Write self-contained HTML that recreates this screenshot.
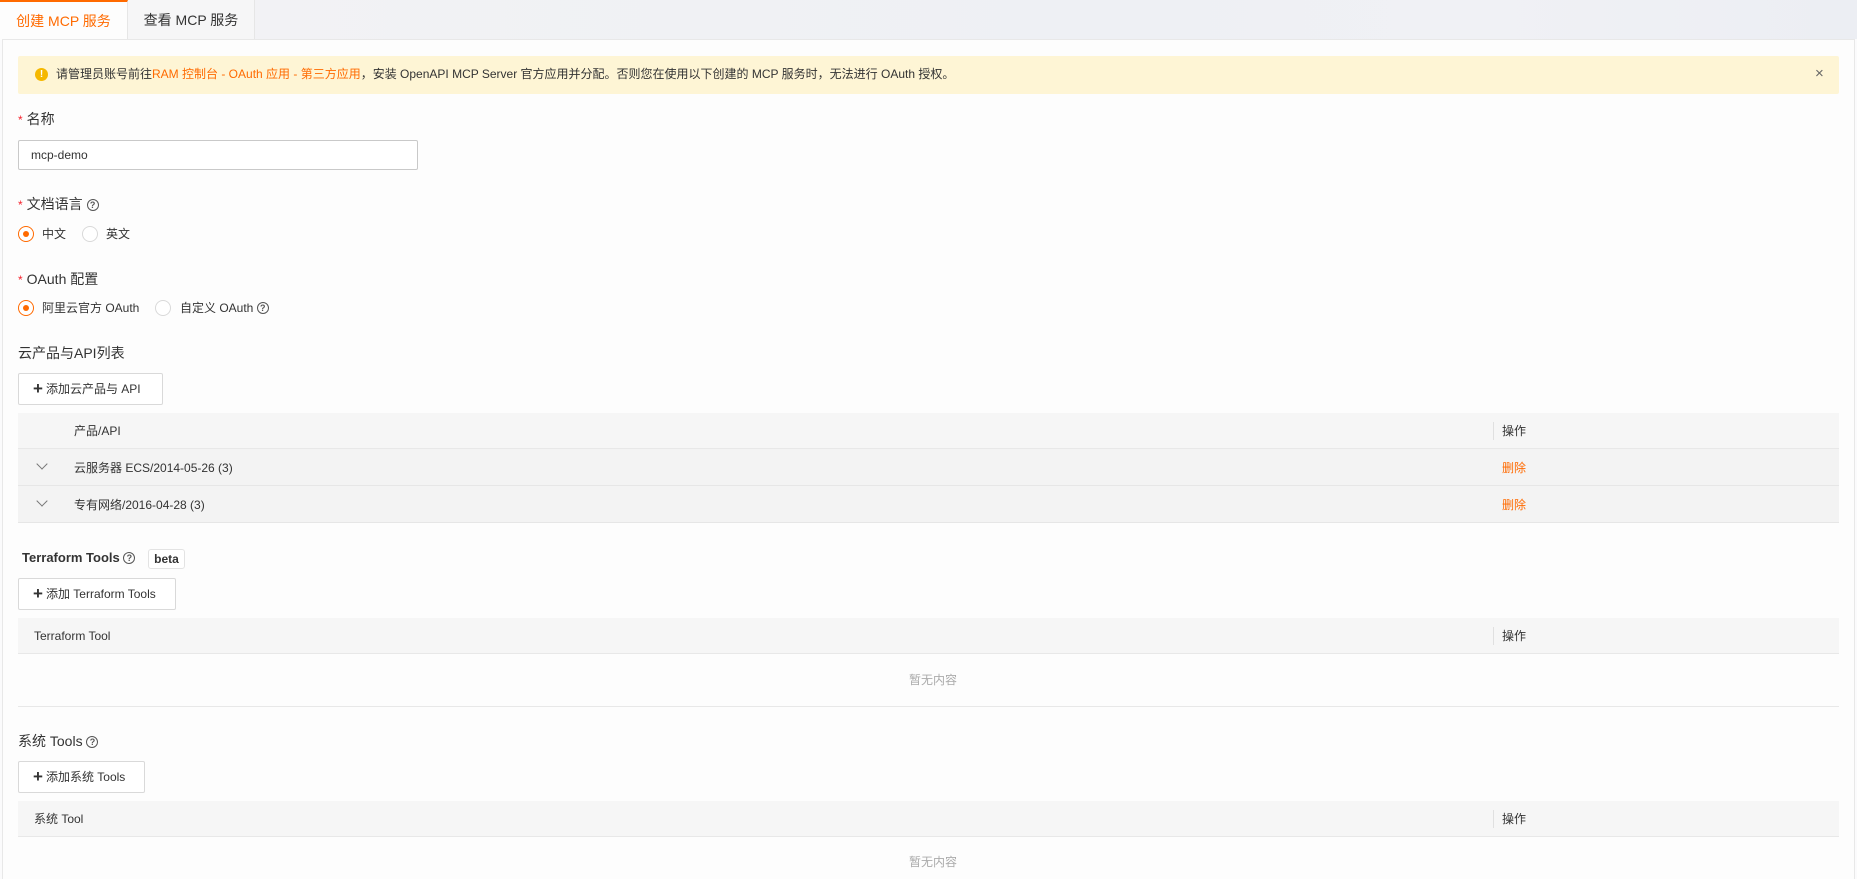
<!DOCTYPE html>
<html><head><meta charset="utf-8"><style>
*{box-sizing:border-box;margin:0;padding:0}
body{width:1857px;height:871px;overflow:hidden;background:#fbfbfc;font-family:"Liberation Sans","Noto Sans CJK SC",sans-serif;font-size:12px;color:#333;position:relative}
.a{position:absolute;white-space:nowrap;line-height:16px}
.top{left:0;top:0;width:1857px;height:39px;background:linear-gradient(90deg,#f3f3f5 0%,#eef0f4 60%,#f0f1f5 80%,#eceef3 100%)}
.tab{top:0;height:40px;line-height:40px;font-size:14px;text-align:center;border-right:1px solid #e6e6e6}
.card{left:2px;top:39px;width:1853px;height:840px;background:#fdfdfd;border-left:1px solid #e8e8e8;border-right:1px solid #e8e8e8;border-top:1px solid #e8e8e8}
.lbl{font-size:14px;color:#333;line-height:17px}
.star{color:#f5222d;font-size:12px;margin-right:4px}
.q{display:inline-block;width:12px;height:12px;border:1.2px solid #555;border-radius:50%;font-size:9px;line-height:10px;text-align:center;color:#555;vertical-align:1px;font-weight:bold}
.radio{width:16px;height:16px;border-radius:50%;border:1px solid #d9d9d9;background:#fff}
.radio.on{border:1.5px solid #ff6a00}
.radio.on::after{content:"";position:absolute;left:3.5px;top:3.5px;width:6px;height:6px;border-radius:50%;background:#ff6a00}
.btn{height:32px;border:1px solid #d9d9d9;background:#fff;border-radius:2px;line-height:30px;font-size:12px;padding-left:14px}
.btn b{font-size:17px;font-weight:bold;margin-right:3px;vertical-align:-1px}
.th{left:18px;width:1821px;height:36px;background:#f6f6f6;border-bottom:1px solid #e8e8e8}
.tr{left:18px;width:1821px;height:37px;background:#f3f3f3;border-bottom:1px solid #e6e6e6}
.div{width:1px;height:18px;background:#e0e0e0}
.del{color:#ff6a00}
.chev{width:8px;height:8px;border-right:1.2px solid #777;border-bottom:1.2px solid #777;transform:rotate(45deg)}
</style></head><body>
<div class="a top"></div>
<div class="a tab" style="left:0;width:128px;background:#fdfdfd;color:#ff6a00;border-top:2px solid #ff6a00;line-height:38px;height:40px">创建 MCP 服务</div>
<div class="a tab" style="left:128px;width:127px;background:#f6f6f7;color:#333;line-height:40px">查看 MCP 服务</div>
<div class="a card"></div>

<div class="a" style="left:18px;top:56px;width:1821px;height:38px;background:#fef5d5;border-radius:2px"></div>
<div class="a" style="left:35px;top:68px;width:13px;height:13px;border-radius:50%;background:#f5b800;color:#fff;font-size:10px;font-weight:bold;text-align:center;line-height:13px">!</div>
<div class="a" style="left:56px;top:66px">请管理员账号前往<span style="color:#ff6a00">RAM 控制台 - OAuth 应用 - 第三方应用</span>，安装 OpenAPI MCP Server 官方应用并分配。否则您在使用以下创建的 MCP 服务时，无法进行 OAuth 授权。</div>
<div class="a" style="left:1815px;top:66px;font-size:15px;color:#666">×</div>

<div class="a lbl" style="left:18px;top:111px"><span class="star">*</span>名称</div>
<div class="a" style="left:18px;top:140px;width:400px;height:30px;border:1px solid #c9c9c9;background:#fff;border-radius:2px;padding-left:12px;line-height:28px;font-size:12px">mcp-demo</div>

<div class="a lbl" style="left:18px;top:196px"><span class="star">*</span>文档语言 <span class="q">?</span></div>
<div class="a radio on" style="left:18px;top:226px"></div>
<div class="a" style="left:42px;top:226px">中文</div>
<div class="a radio" style="left:82px;top:226px"></div>
<div class="a" style="left:106px;top:226px">英文</div>

<div class="a lbl" style="left:18px;top:271px"><span class="star">*</span>OAuth 配置</div>
<div class="a radio on" style="left:18px;top:300px"></div>
<div class="a" style="left:42px;top:300px">阿里云官方 OAuth</div>
<div class="a radio" style="left:155px;top:300px"></div>
<div class="a" style="left:180px;top:300px">自定义 OAuth <span class="q">?</span></div>

<div class="a lbl" style="left:18px;top:345px">云产品与API列表</div>
<div class="a btn" style="left:18px;top:373px;width:145px;line-height:30px"><b>+</b>添加云产品与 API</div>

<div class="a th" style="top:413px"></div>
<div class="a" style="left:74px;top:423px">产品/API</div>
<div class="a div" style="left:1493px;top:422px"></div>
<div class="a" style="left:1502px;top:423px">操作</div>
<div class="a tr" style="top:449px"></div>
<div class="a chev" style="left:38px;top:460px"></div>
<div class="a" style="left:74px;top:460px">云服务器 ECS/2014-05-26 (3)</div>
<div class="a del" style="left:1502px;top:460px">删除</div>
<div class="a tr" style="top:486px"></div>
<div class="a chev" style="left:38px;top:497px"></div>
<div class="a" style="left:74px;top:497px">专有网络/2016-04-28 (3)</div>
<div class="a del" style="left:1502px;top:497px">删除</div>

<div class="a" style="left:22px;top:550px;font-size:13px;font-weight:bold;color:#333">Terraform Tools <span class="q" style="font-weight:bold">?</span></div>
<div class="a" style="left:148px;top:549px;width:37px;height:20px;border:1px solid #e3e3e3;border-radius:3px;background:#fff;text-align:center;line-height:18px;font-weight:bold">beta</div>
<div class="a btn" style="left:18px;top:578px;width:158px;line-height:30px"><b>+</b>添加 Terraform Tools</div>

<div class="a th" style="top:618px"></div>
<div class="a" style="left:34px;top:628px">Terraform Tool</div>
<div class="a div" style="left:1493px;top:627px"></div>
<div class="a" style="left:1502px;top:628px">操作</div>
<div class="a" style="left:18px;top:706px;width:1821px;height:1px;background:#e8e8e8"></div>
<div class="a" style="left:909px;top:672px;color:#aaa">暂无内容</div>

<div class="a lbl" style="left:18px;top:733px">系统 Tools <span class="q">?</span></div>
<div class="a btn" style="left:18px;top:761px;width:127px;line-height:30px"><b>+</b>添加系统 Tools</div>

<div class="a th" style="top:801px"></div>
<div class="a" style="left:34px;top:811px">系统 Tool</div>
<div class="a div" style="left:1493px;top:810px"></div>
<div class="a" style="left:1502px;top:811px">操作</div>
<div class="a" style="left:909px;top:854px;color:#aaa">暂无内容</div>
</body></html>
